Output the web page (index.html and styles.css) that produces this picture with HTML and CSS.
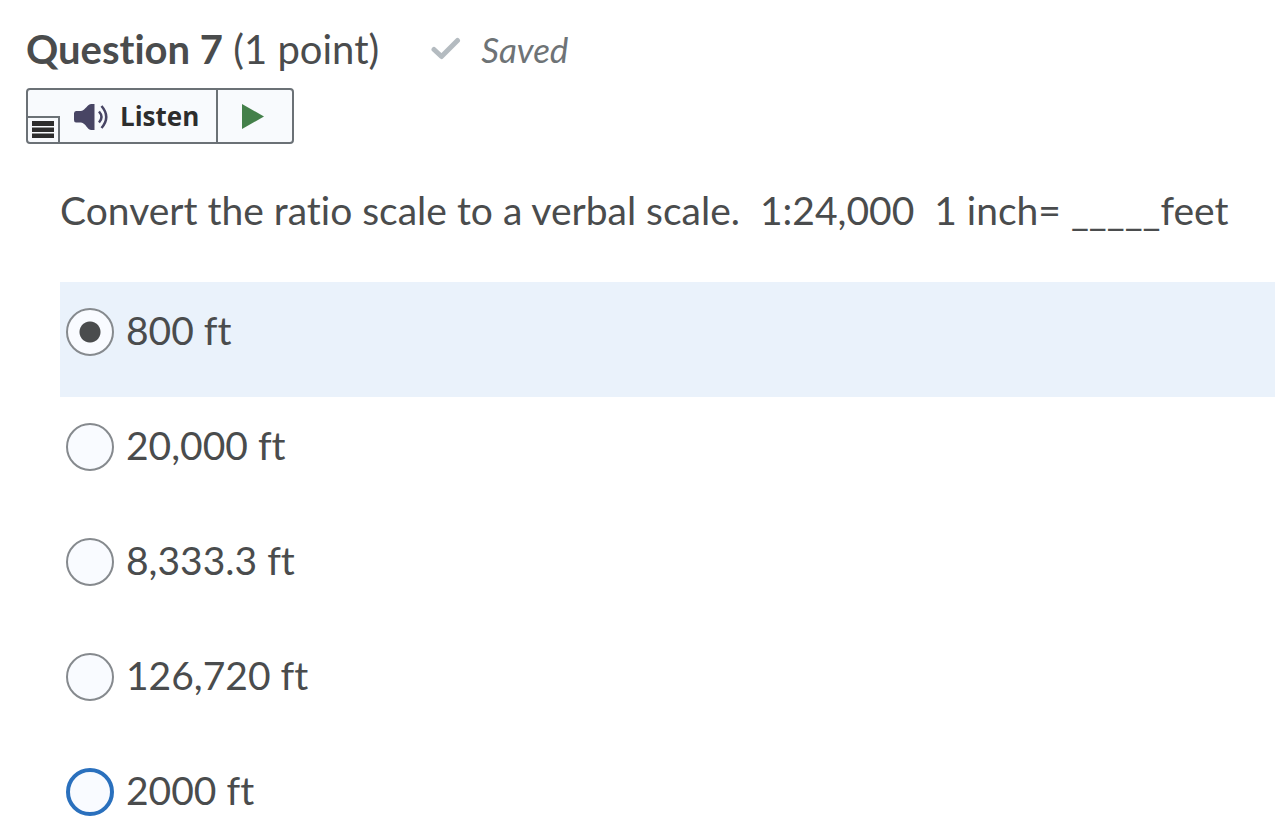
FILE: index.html
```html
<!DOCTYPE html>
<html lang="en">
<head>
  <meta charset="UTF-8">
  <meta name="viewport" content="width=device-width, initial-scale=1.0">
  <title>Quiz - Question 7</title>
  <link rel="stylesheet" href="styles.css">
</head>
<body>
  <main class="question">
    <header class="question-header">
      <h2 class="question-title"><strong>Question 7</strong> (1 point)</h2>
      <div class="saved">
        <svg class="saved-icon" width="30" height="24" viewBox="0 0 30 24" aria-hidden="true">
          <path d="M3 12.500 L10.500 19.500 L26.500 3.500" fill="none" stroke="#b4bbc0" stroke-width="5" stroke-linecap="round" stroke-linejoin="round"/>
        </svg>
        <span class="saved-text">Saved</span>
      </div>
    </header>

    <!-- Read-aloud toolbar -->
    <div class="reader">
      <button type="button" class="reader-menu" aria-label="Reader menu">
        <svg width="22" height="18" viewBox="0 0 22 18" aria-hidden="true">
          <path d="M0 0h22v5H0zM0 6.500h22v4.500H0zM0 12.500h22v4.500H0z" fill="#2d2d2d"/>
        </svg>
      </button>
      <button type="button" class="reader-listen">
        <svg width="36" height="28" viewBox="0 0 36 28" aria-hidden="true">
          <path d="M3 9 H8 C13 8 14 2 18.500 2 H21.500 V28 H18.500 C14 28 13 21 8 20.500 H3 Q1 20.500 1 18 V11.500 Q1 9 3 9Z" fill="#484564"/>
          <path d="M26 9.500 Q31 15 26 20.500 M28.500 4 Q38 15 28.500 26" fill="none" stroke="#484564" stroke-width="2.500"/>
        </svg>
        <span>Listen</span>
      </button>
      <button type="button" class="reader-play" aria-label="Play">
        <svg width="22" height="26" viewBox="0 0 22 26" aria-hidden="true">
          <path d="M0 1 L22 13.500 L0 26Z" fill="#44804a"/>
        </svg>
      </button>
    </div>

    <form class="question-body">
      <p class="question-text" id="question-text">Convert the ratio scale to a verbal scale.&nbsp; 1:24,000&nbsp; 1 inch= _____feet</p>

      <div class="answers" role="radiogroup" aria-labelledby="question-text">
        <div class="answer selected">
          <input type="radio" name="answer" id="answer-1" checked>
          <label for="answer-1">800 ft</label>
        </div>
        <div class="answer">
          <input type="radio" name="answer" id="answer-2">
          <label for="answer-2">20,000 ft</label>
        </div>
        <div class="answer">
          <input type="radio" name="answer" id="answer-3">
          <label for="answer-3">8,333.3 ft</label>
        </div>
        <div class="answer">
          <input type="radio" name="answer" id="answer-4">
          <label for="answer-4">126,720 ft</label>
        </div>
        <div class="answer highlighted">
          <input type="radio" name="answer" id="answer-5">
          <label for="answer-5">2000 ft</label>
        </div>
      </div>
    </form>
  </main>
</body>
</html>
```
FILE: styles.css
```css
* { box-sizing: border-box; }
body {
  margin: 0;
  font-family: Lato, sans-serif;
  font-size: 39px;
  line-height: 44px;
  font-variant-ligatures: none;
  color: #4a4c4d;
  background: #fff;
}
.question { padding: 25px 0 0 26px; }

/* Header */
.question-header {
  display: flex; align-items: center; gap: 52px;
}
.question-title {
  margin: 0;
  font-size: 40px; line-height: 48px; font-weight: 400;
}
.saved {
  display: flex; align-items: center; gap: 20px;
  color: #6e7376;
}
.saved-icon { display: block; }
.saved-text { font-size: 35px; line-height: 40px; font-style: italic; }

/* Reader toolbar */
.reader {
  display: flex; width: fit-content;
  margin-top: 15px;
  border: 2px solid #6b7176; border-radius: 4px;
  background: #f8fafd;
  overflow: hidden;
}
.reader button {
  display: flex; align-items: center; justify-content: center;
  height: 52px;
  margin: 0; padding: 0;
  border: 0; background: transparent;
  color: #2d2d2d;
  cursor: pointer;
}
.reader .reader-menu {
  align-self: flex-end;
  width: 32px; height: 26px;
  border-top: 2px solid #6b7176; border-right: 2px solid #6b7176;
}
.reader .reader-listen {
  gap: 11px;
  padding: 0 17px 0 13px;
  font-family: "Open Sans", sans-serif;
  font-size: 26px; font-weight: 700;
}
.reader .reader-play {
  width: 76px;
  padding-right: 4px;
  border-left: 2px solid #6b7176;
}

/* Question and answers */
.question-body { padding: 44px 0 0 34px; }
.question-text { margin: 0 0 50px; }
.answer {
  display: flex; align-items: flex-start; gap: 12px;
  min-height: 115px;
  padding: 26px 6px;
}
.answer.selected { background: #eaf2fb; }
.answer input {
  appearance: none;
  flex: none;
  width: 48px; height: 48px;
  margin: 0;
  border: 2px solid #868a8e; border-radius: 50%;
  background: #f9fbff;
}
.answer input:checked {
  background: radial-gradient(circle, #4a4c4d 10px, #f9fbff 11px);
}
.answer.highlighted input { border: 4px solid #2a70bd; }
```
